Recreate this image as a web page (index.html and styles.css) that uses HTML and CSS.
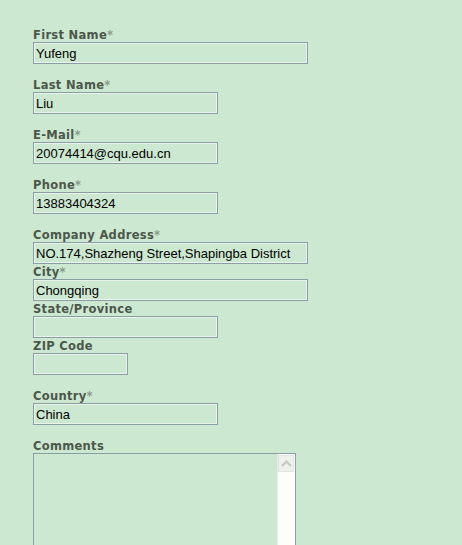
FILE: index.html
```html
<!DOCTYPE html>
<html>
<head>
<meta charset="utf-8">
<link rel="stylesheet" href="styles.css">
</head>
<body>
<form class="form">
  <div class="field">
    <label class="lbl">First Name<span class="req">*</span></label>
    <input class="inp w-l" type="text" value="Yufeng">
  </div>
  <div class="field">
    <label class="lbl">Last Name<span class="req">*</span></label>
    <input class="inp w-m" type="text" value="Liu">
  </div>
  <div class="field">
    <label class="lbl">E-Mail<span class="req">*</span></label>
    <input class="inp w-m" type="text" value="20074414@cqu.edu.cn">
  </div>
  <div class="field">
    <label class="lbl">Phone<span class="req">*</span></label>
    <input class="inp w-m" type="text" value="13883404324">
  </div>
  <div class="field tight">
    <label class="lbl">Company Address<span class="req">*</span></label>
    <input class="inp w-l" type="text" value="NO.174,Shazheng Street,Shapingba District">
  </div>
  <div class="field tight">
    <label class="lbl">City<span class="req">*</span></label>
    <input class="inp w-l" type="text" value="Chongqing">
  </div>
  <div class="field tight">
    <label class="lbl">State/Province</label>
    <input class="inp w-m" type="text" value="">
  </div>
  <div class="field">
    <label class="lbl">ZIP Code</label>
    <input class="inp w-s" type="text" value="">
  </div>
  <div class="field">
    <label class="lbl">Country<span class="req">*</span></label>
    <input class="inp w-m" type="text" value="China">
  </div>
  <div class="field">
    <label class="lbl">Comments</label>
    <div class="ta-box">
      <textarea class="ta"></textarea>
      <div class="sb">
        <div class="sb-btn">
          <svg width="11" height="7" viewBox="0 0 11 7"><path d="M1 6 L5.5 1.5 L10 6" fill="none" stroke="#c4c8c4" stroke-width="2"/></svg>
        </div>
      </div>
    </div>
  </div>
</form>
</body>
</html>
```

FILE: styles.css
```css
html, body {
  margin: 0;
  padding: 0;
  background: #cde8d0;
}
body {
  padding: 27px 0 0 33px;
}
.form {
  display: flex;
  flex-direction: column;
}
.field {
  display: flex;
  flex-direction: column;
  align-items: flex-start;
  margin-bottom: 13px;
}
.field.tight {
  margin-bottom: 0;
}
.lbl {
  display: block;
  box-sizing: border-box;
  font-family: "DejaVu Sans", Verdana, sans-serif;
  font-weight: bold;
  font-size: 11.5px;
  line-height: 13px;
  height: 15px;
  padding-top: 2px;
  color: #4b574b;
  letter-spacing: 0.3px;
  white-space: nowrap;
}
.req {
  color: #8a9a8a;
}
.inp {
  box-sizing: border-box;
  height: 22px;
  margin: 0;
  padding: 0 2px;
  border: 1px solid #8a9ea6;
  box-shadow: inset 0 0 0 1px #eaf3ea;
  background: #cde8d0;
  font-family: "Liberation Sans", Arial, sans-serif;
  font-size: 13px;
  color: #000;
  outline: none;
}
.w-l { width: 275px; }
.w-m { width: 185px; }
.w-s { width: 95px; }
.ta-box {
  box-sizing: border-box;
  width: 263px;
  height: 130px;
  border: 1px solid #8a9ea6;
  display: flex;
  flex-direction: row;
  background: #cde8d0;
}
.ta {
  flex: 1;
  border: none;
  margin: 0;
  padding: 2px;
  background: transparent;
  resize: none;
  outline: none;
  font-family: "Liberation Sans", Arial, sans-serif;
  font-size: 13px;
}
.sb {
  width: 17px;
  background: #fdfefa;
  border-left: 1px solid #e4ece4;
  display: flex;
  flex-direction: column;
  align-items: stretch;
}
.sb-btn {
  height: 17px;
  margin: 1px 1px 0 0;
  background: #eef0ec;
  border: 1px solid #e2e6e0;
  box-sizing: border-box;
  display: flex;
  align-items: center;
  justify-content: center;
}
```
